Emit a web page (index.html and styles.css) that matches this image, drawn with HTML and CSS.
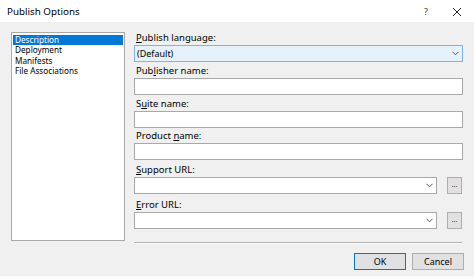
FILE: index.html
```html
<!DOCTYPE html>
<html>
<head>
<meta charset="utf-8">
<link rel="stylesheet" href="styles.css">
</head>
<body>
<div class="window">
  <div class="titlebar">
    <span class="title">Publish Options</span>
    <span class="help">?</span>
    <span class="close">
      <svg width="10" height="10" viewBox="0 0 10 10"><path d="M1 1 L9 9 M9 1 L1 9" stroke="#222" stroke-width="1" fill="none"/></svg>
    </span>
  </div>
  <div class="content">
    <div class="main">
      <ul class="list">
        <li class="item selected">Description</li>
        <li class="item">Deployment</li>
        <li class="item">Manifests</li>
        <li class="item">File Associations</li>
      </ul>
      <div class="panel">
        <div class="group">
          <div class="label"><u>P</u>ublish language:</div>
          <div class="combo active"><span class="value">(Default)</span><span class="chev"><svg width="7" height="5" viewBox="0 0 7 5"><path d="M0.5 0.8 L3.5 3.8 L6.5 0.8" stroke="#555" stroke-width="1" fill="none"/></svg></span></div>
        </div>
        <div class="group">
          <div class="label">Pub<u>l</u>isher name:</div>
          <div class="input"></div>
        </div>
        <div class="group tight">
          <div class="label">S<u>u</u>ite name:</div>
          <div class="input"></div>
        </div>
        <div class="group loose">
          <div class="label">Product <u>n</u>ame:</div>
          <div class="input"></div>
        </div>
        <div class="group url">
          <div class="label"><u>S</u>upport URL:</div>
          <div class="row">
            <div class="combo"><span class="value"></span><span class="chev"><svg width="7" height="5" viewBox="0 0 7 5"><path d="M0.5 0.8 L3.5 3.8 L6.5 0.8" stroke="#555" stroke-width="1" fill="none"/></svg></span></div>
            <div class="browse">...</div>
          </div>
        </div>
        <div class="group last">
          <div class="label"><u>E</u>rror URL:</div>
          <div class="row">
            <div class="combo"><span class="value"></span><span class="chev"><svg width="7" height="5" viewBox="0 0 7 5"><path d="M0.5 0.8 L3.5 3.8 L6.5 0.8" stroke="#555" stroke-width="1" fill="none"/></svg></span></div>
            <div class="browse">...</div>
          </div>
        </div>
        <div class="separator"></div>
      </div>
    </div>
    <div class="buttons">
      <div class="btn default">OK</div>
      <div class="btn">Cancel</div>
    </div>
  </div>
  <div class="bottom-edge"></div>
</div>
</body>
</html>
```
FILE: styles.css
```css
* { box-sizing: border-box; }
html, body { margin: 0; padding: 0; }
body {
  width: 474px;
  height: 279px;
  overflow: hidden;
  font-family: "Noto Sans", "Open Sans", sans-serif;
  font-size: 9px;
  color: #000;
  background: #f0f0f0;
}
.window { width: 474px; height: 279px; display: flex; flex-direction: column; }
.titlebar {
  flex: 0 0 22px;
  height: 22px;
  background: #fff;
  display: flex;
  align-items: center;
  padding-left: 7px;
  padding-top: 1px;
}
.title { flex: 1; font-size: 9.8px; color: #000; }
.help { width: 14px; text-align: center; font-size: 9px; color: #333; margin-right: 19px; }
.close { width: 10px; height: 10px; margin-right: 12px; display: flex; }
.content {
  flex: 1;
  background: #f0f0f0;
  padding: 10px 10px 0 11px;
  display: flex;
  flex-direction: column;
}
.main { display: flex; gap: 9px; }
.list {
  list-style: none;
  margin: 0;
  padding: 2px 1px;
  width: 114px;
  height: 209px;
  background: #fff;
  border: 1px solid #a9a9a9;
  font-size: 8.2px;
}
.item { height: 10.4px; line-height: 10px; padding-left: 2px; white-space: nowrap; }
.item.selected { background: #0078d7; color: #fff; }
.panel { width: 329px; display: flex; flex-direction: column; }
.group { display: flex; flex-direction: column; margin-bottom: 3px; }
.group.tight { margin-bottom: 2px; }
.group.loose { margin-bottom: 4px; }
.group.url { margin-bottom: 5px; }
.group.last { margin-bottom: 13px; }
.label { height: 13px; line-height: 12px; padding-left: 2px; white-space: nowrap; font-size: 9.5px; }
.label u { text-decoration-thickness: 1px; text-underline-offset: 1px; }
.input {
  height: 17px;
  background: #fff;
  border: 1px solid #a9a9a9;
}
.combo {
  height: 17px;
  background: #fff;
  border: 1px solid #a9a9a9;
  display: flex;
  align-items: center;
  padding-left: 2px;
}
.combo.active { background: #e5f1fb; border-color: #7eb4ea; }
.combo .value { flex: 1; }
.chev { width: 14px; display: flex; justify-content: center; align-items: center; }
.row { display: flex; gap: 10px; }
.row .combo { width: 303px; }
.browse {
  width: 15px;
  height: 17px;
  background: #e1e1e1;
  border: 1px solid #adadad;
  font-size: 7px;
  display: flex;
  align-items: center;
  justify-content: center;
  color: #333;
  padding-bottom: 2px;
}
.separator {
  height: 2px;
  width: 328px;
  border-top: 1px solid #b4b4b4;
  border-bottom: 1px solid #fafafa;
}
.buttons {
  display: flex;
  justify-content: flex-end;
  gap: 6px;
  margin-top: 9px;
}
.btn {
  width: 52px;
  height: 17px;
  background: #e1e1e1;
  border: 1px solid #adadad;
  display: flex;
  align-items: center;
  justify-content: center;
  font-size: 9px;
}
.btn.default { border-color: #0078d7; }
.bottom-edge { flex: 0 0 3px; background: #fbfbfb; }
```
